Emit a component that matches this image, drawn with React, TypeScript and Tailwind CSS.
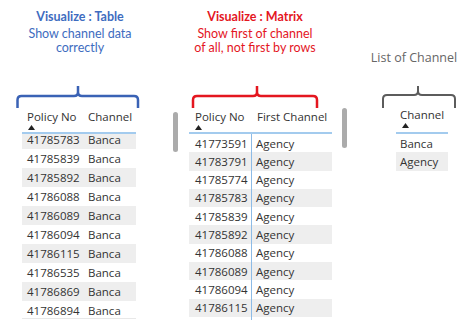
import React from "react";

const tableRows = ["41785783", "41785839", "41785892", "41786088", "41786089", "41786094", "41786115", "41786535", "41786869", "41786894"];
const matrixRows = ["41773591", "41783791", "41785774", "41785783", "41785839", "41785892", "41786088", "41786089", "41786094", "41786115"];

function SortArrow() {
    return (
        <svg width="7" height="5" viewBox="0 0 7 5" className="block">
            <path d="M0 5 L3.5 0 L7 5 Z" fill="#222" />
        </svg>
    );
}

function Brace({ left, right, mid, y, color, width }: { left: number; right: number; mid: number; y: number; color: string; width: number }) {
    const d = `M${left} 23 V${y + 4} Q${left} ${y} ${left + 4} ${y} H${mid - 4} Q${mid} ${y} ${mid} ${y - 4} V1 M${mid} ${y - 4} Q${mid} ${y} ${mid + 4} ${y} H${right - 4} Q${right} ${y} ${right} ${y + 4} V23`;
    return (
        <svg className="block w-full h-[23px]">
            <path d={d} fill="none" stroke={color} strokeWidth={width} strokeLinejoin="round" />
        </svg>
    );
}

export default function App() {
    return (
        <main className="w-[474px] h-[335px] bg-white flex overflow-hidden font-['Open_Sans',sans-serif] text-[#333]">
            {/* Table */}
            <section className="w-[160px] shrink-0 flex flex-col">
                <div className="h-[85px] pt-[10px] text-center font-['Lato',sans-serif] text-[12.5px] leading-[14px] text-[#3e6cc0]">
                    <p className="font-bold mb-[3px]">Visualize : Table</p>
                    <p>Show channel data</p>
                    <p>correctly</p>
                </div>
                <Brace left={17.5} right={138} mid={78} y={11} color="#3a62b5" width={2.5} />
                <div className="ml-[22px] w-[114px]">
                    <div className="h-[24px] flex text-[11.5px] leading-[14px] pt-[2px]">
                        <div className="w-[62px] pl-[5px]">
                            <p>Policy No</p>
                            <div className="pl-[1px] pt-[1px]"><SortArrow /></div>
                        </div>
                        <p className="pl-[4px]">Channel</p>
                    </div>
                    <div className="h-[2px] bg-[#a3cbee]" />
                    <div className="h-[185px] overflow-hidden border-b border-[#e8e8e8]">
                        <div className="-mt-[4px]">
                            {tableRows.map((p, i) => (
                                <div key={p} className={`h-[19px] flex items-center text-[11.5px] ${i % 2 === 0 ? "bg-[#eeeeee]" : ""}`}>
                                    <span className="w-[62px] pl-[5px]">{p}</span>
                                    <span className="pl-[4px]">Banca</span>
                                </div>
                            ))}
                        </div>
                    </div>
                </div>
            </section>

            {/* Matrix */}
            <section className="w-[200px] shrink-0 flex flex-col">
                <div className="h-[85px] pt-[10px] pr-[10px] text-center font-['Lato',sans-serif] text-[12.5px] leading-[14px] text-[#e4161f]">
                    <p className="font-bold mb-[3px]">Visualize : Matrix</p>
                    <p>Show first of channel</p>
                    <p>of all, not first by rows</p>
                </div>
                <Brace left={33} right={157} mid={97} y={11} color="#e4161f" width={2.5} />
                <div className="flex">
                    <div className="ml-[13px] mt-[4px] w-[5px] h-[40px] rounded-full bg-[#ababab]" />
                    <div className="ml-[11px] w-[143px]">
                        <div className="h-[24px] flex text-[11.5px] leading-[14px] pt-[2px]">
                            <div className="w-[63px] pl-[6px]">
                                <p>Policy No</p>
                                <div className="pt-[1px]"><SortArrow /></div>
                            </div>
                            <p className="pl-[5px]">First Channel</p>
                        </div>
                        <div className="h-[2px] bg-[#a3cbee]" />
                        {matrixRows.map((p, i) => (
                            <div key={p} className={`h-[18.3px] flex text-[11.5px] ${i % 2 === 1 ? "bg-[#eeeeee]" : ""}`}>
                                <span className="w-[63px] pl-[6px] flex items-center border-r-[1.5px] border-[#8dbbe6]">{p}</span>
                                <span className="pl-[4px] flex items-center">Agency</span>
                            </div>
                        ))}
                        <div className="w-[63px] h-[3px] border-r-[1.5px] border-[#8dbbe6]" />
                    </div>
                    <div className="ml-[10px] w-[5px] h-[40px] rounded-full bg-[#ababab]" />
                </div>
            </section>

            {/* List */}
            <section className="flex-1 flex flex-col">
                <div className="h-[85px] pt-[51px] pr-[6px] text-center text-[12.5px] leading-[14px] text-[#666]">
                    <p>List of Channel</p>
                </div>
                <Brace left={23} right={95} mid={58} y={10} color="#5c5c5c" width={2} />
                <div className="ml-[36px] w-[52px]">
                    <div className="h-[24px] text-[11.5px] leading-[14px] pl-[4px]">
                        <p>Channel</p>
                        <div className="pl-[2px] pt-[1px]"><SortArrow /></div>
                    </div>
                    <div className="h-[2px] bg-[#a3cbee]" />
                    <div className="h-[18.3px] flex items-center pl-[4px] text-[11.5px]">Banca</div>
                    <div className="h-[18.3px] flex items-center pl-[4px] text-[11.5px] bg-[#eeeeee]">Agency</div>
                </div>
            </section>
        </main>
    );
}
